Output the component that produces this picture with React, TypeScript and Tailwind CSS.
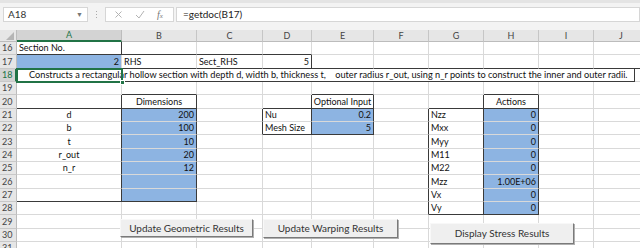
import React from 'react';

type Col = { l: string; w: string };
type Txt = { t: string; a: 'l' | 'c' | 'r' };

const COLS: Col[] = [
  { l: 'A', w: 'w-[105px]' },
  { l: 'B', w: 'w-[75px]' },
  { l: 'C', w: 'w-[66px]' },
  { l: 'D', w: 'w-[49px]' },
  { l: 'E', w: 'w-[62px]' },
  { l: 'F', w: 'w-[55px]' },
  { l: 'G', w: 'w-[55px]' },
  { l: 'H', w: 'w-[55px]' },
  { l: 'I', w: 'w-[55px]' },
  { l: 'J', w: 'w-[55px]' },
];

const ROWS = [16, 17, 18, 19, 20, 21, 22, 23, 24, 25, 26, 27, 28, 29, 30, 31];

// [r1, c1, r2, c2] outside borders
const BOXES = [
  [16, 0, 16, 0],
  [17, 0, 17, 3],
  [18, 0, 18, 9],
  [20, 1, 20, 1],
  [21, 0, 27, 0],
  [21, 1, 27, 1],
  [21, 3, 22, 3],
  [20, 4, 20, 4],
  [21, 4, 22, 4],
  [21, 6, 28, 6],
  [20, 7, 20, 7],
  [21, 7, 28, 7],
];

const BLUE = (r: number, c: number) =>
  (r === 17 && c === 0) ||
  (c === 1 && r >= 21 && r <= 27) ||
  (c === 4 && r >= 21 && r <= 22) ||
  (c === 7 && r >= 21 && r <= 28);

const DATA: Record<string, Txt> = {
  '16-0': { t: 'Section No.', a: 'l' },
  '17-0': { t: '2', a: 'r' },
  '17-1': { t: 'RHS', a: 'l' },
  '17-2': { t: 'Sect_RHS', a: 'l' },
  '17-3': { t: '5', a: 'r' },
  '20-1': { t: 'Dimensions', a: 'c' },
  '20-4': { t: 'Optional Input', a: 'c' },
  '20-7': { t: 'Actions', a: 'c' },
  '21-3': { t: 'Nu', a: 'l' },
  '22-3': { t: 'Mesh Size', a: 'l' },
  '21-4': { t: '0.2', a: 'r' },
  '22-4': { t: '5', a: 'r' },
};
['d', 'b', 't', 'r_out', 'n_r'].forEach((t, i) => (DATA[`${21 + i}-0`] = { t, a: 'c' }));
['200', '100', '10', '20', '12'].forEach((t, i) => (DATA[`${21 + i}-1`] = { t, a: 'r' }));
['Nzz', 'Mxx', 'Myy', 'M11', 'M22', 'Mzz', 'Vx', 'Vy'].forEach((t, i) => (DATA[`${21 + i}-6`] = { t, a: 'l' }));
['0', '0', '0', '0', '0', '1.00E+06', '0', '0'].forEach((t, i) => (DATA[`${21 + i}-7`] = { t, a: 'r' }));

const darkRight = (r: number, c: number) =>
  BOXES.some(([r1, c1, r2, c2]) => r >= r1 && r <= r2 && (c === c2 || c + 1 === c1));
const darkBottom = (r: number, c: number) =>
  BOXES.some(([r1, c1, r2, c2]) => c >= c1 && c <= c2 && (r === r2 || r + 1 === r1));

const DESC =
  'Constructs a rectangular hollow section with depth d, width b, thickness t,    outer radius r_out, using n_r points to construct the inner and outer radii.';

const Cell = ({ r, c }: { r: number; c: number }) => {
  const d = DATA[`${r}-${c}`];
  return (
    <div
      className={`${COLS[c].w} h-full shrink-0 flex items-center overflow-hidden whitespace-nowrap px-[2px] border-r border-b ${
        darkRight(r, c) ? 'border-r-[#3a3a3a]' : 'border-r-[#d9d9d9]'
      } ${darkBottom(r, c) ? 'border-b-[#3a3a3a]' : 'border-b-[#d9d9d9]'} ${BLUE(r, c) ? 'bg-[#8db4e2]' : 'bg-white'} ${
        d?.a === 'r' ? 'justify-end' : d?.a === 'c' ? 'justify-center' : 'justify-start'
      }`}
    >
      {d && <span className="text-[#111]">{d.t}</span>}
    </div>
  );
};

const RowHeader = ({ r }: { r: number }) => (
  <div
    className={`w-[17px] h-full shrink-0 flex items-center pl-[2px] text-[9px] border-b border-b-[#c8c8c8] ${
      r === 18
        ? 'bg-[#d3d3d3] text-[#217346] border-r-2 border-r-[#217346]'
        : 'bg-[#e6e6e6] text-[#444] border-r border-r-[#bcbcbc]'
    }`}
  >
    {r}
  </div>
);

const XlButton = ({ label, cls }: { label: string; cls: string }) => (
  <div
    className={`absolute ${cls} flex items-center justify-center bg-[#efefef] border border-t-[#f8f8f8] border-l-[#f8f8f8] border-r-[#7a7a7a] border-b-[#7a7a7a] shadow-[1px_1px_0_#b0b0b0] text-[10px] text-[#333]`}
  >
    {label}
  </div>
);

export default function App() {
  return (
    <div className="relative w-[640px] h-[248px] overflow-hidden bg-white font-['Lato',sans-serif] text-[9px] text-[#111]">
      {/* formula bar */}
      <div className="h-[30px] bg-[#f3f3f3] border-t-[3px] border-t-[#e4e4e4] flex items-start pt-[4px] pl-[3px]">
        <div className="w-[85px] h-[15px] bg-white border border-[#d6d6d6] flex items-center justify-between px-[4px] text-[10px] text-[#333]">
          <span>A18</span>
          <span className="text-[7px] text-[#777]">▼</span>
        </div>
        <div className="w-[17px] h-[15px] flex flex-col items-center justify-center gap-[2px]">
          <span className="w-[1px] h-[1px] bg-[#aaa]" />
          <span className="w-[1px] h-[1px] bg-[#aaa]" />
          <span className="w-[1px] h-[1px] bg-[#aaa]" />
        </div>
        <div className="w-[69px] h-[15px] bg-white border border-[#d6d6d6] flex items-center text-[#a6a6a6]">
          <svg width="9" height="9" viewBox="0 0 9 9" className="ml-[8px]">
            <path d="M1.5 1.5l6 6M7.5 1.5l-6 6" stroke="#b3b3b3" strokeWidth="1" />
          </svg>
          <svg width="10" height="9" viewBox="0 0 10 9" className="ml-[12px]">
            <path d="M1 5l3 3 5-7" stroke="#b3b3b3" strokeWidth="1" fill="none" />
          </svg>
          <span className="ml-[12px] font-['Liberation_Serif',serif] italic text-[10px] text-[#777]">
            f<span className="text-[7px]">x</span>
          </span>
        </div>
        <div className="flex-1 h-[15px] ml-[2px] bg-white border border-[#d6d6d6] flex items-center pl-[6px] text-[10px] text-[#222]">
          =getdoc(B17)
        </div>
      </div>

      {/* column headers */}
      <div className="flex h-[12px]">
        <div className="w-[17px] shrink-0 bg-[#e6e6e6] border-r border-b border-[#bcbcbc] relative">
          <svg width="8" height="8" viewBox="0 0 8 8" className="absolute right-[2px] bottom-[1px]">
            <path d="M8 0L8 8L0 8Z" fill="#b5b5b5" />
          </svg>
        </div>
        {COLS.map((c, i) => (
          <div
            key={c.l}
            className={`${c.w} shrink-0 flex items-center justify-center text-[9px] border-r ${
              i === 0
                ? 'bg-[#d3d3d3] text-[#217346] border-b-2 border-b-[#217346] border-r-[#bcbcbc]'
                : 'bg-[#e6e6e6] text-[#444] border-b border-b-[#bcbcbc] border-r-[#c6c6c6]'
            }`}
          >
            {c.l}
          </div>
        ))}
      </div>

      {/* rows */}
      {ROWS.map((r) =>
        r === 18 ? (
          <div key={r} className="flex h-[13.33px]">
            <RowHeader r={r} />
            <div className="w-[618px] shrink-0 h-full flex items-center whitespace-pre pl-[12px] border-r border-b border-r-[#3a3a3a] border-b-[#3a3a3a] bg-white text-[9.2px]">
              {DESC}
            </div>
            <div className="w-[31px] shrink-0 h-full border-b border-b-[#d9d9d9]" />
          </div>
        ) : (
          <div key={r} className="flex h-[13.33px]">
            <RowHeader r={r} />
            {COLS.map((_, c) => (
              <Cell key={c} r={r} c={c} />
            ))}
          </div>
        )
      )}

      {/* active cell A18 */}
      <div className="absolute left-[16px] top-[68px] w-[107px] h-[15px] border-2 border-[#217346]" />
      <div className="absolute left-[120px] top-[80px] w-[5px] h-[5px] bg-[#217346] border border-white" />

      <XlButton label="Update Geometric Results" cls="left-[120px] top-[219px] w-[133px] h-[18px]" />
      <XlButton label="Update Warping Results" cls="left-[263px] top-[219px] w-[135px] h-[19px]" />
      <XlButton label="Display Stress Results" cls="left-[430px] top-[223px] w-[144px] h-[21px]" />
    </div>
  );
}
